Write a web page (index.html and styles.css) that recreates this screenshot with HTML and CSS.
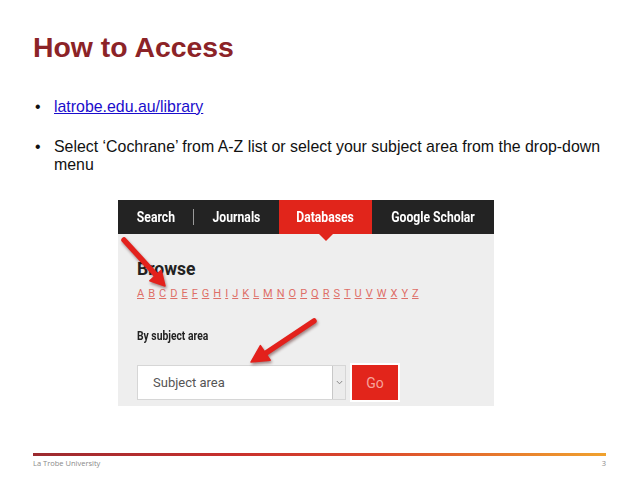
FILE: index.html
```html
<!DOCTYPE html>
<html>
<head>
<meta charset="utf-8">
<link rel="stylesheet" href="styles.css">
</head>
<body>
<div class="slide">
  <h1 class="title">How to Access</h1>
  <ul class="bullets">
    <li class="item"><span class="dot">•</span><a class="link" href="#">latrobe.edu.au/library</a></li>
    <li class="item item-2"><span class="dot">•</span><span class="txt">Select ‘Cochrane’ from A-Z list or select your subject area from the drop-down menu</span></li>
  </ul>

  <div class="shot">
    <nav class="tabs">
      <div class="tab tab-search"><span class="cond">Search</span></div>
      <div class="divider"></div>
      <div class="tab tab-journals"><span class="cond">Journals</span></div>
      <div class="tab tab-db"><span class="cond">Databases</span></div>
      <div class="tab tab-gs"><span class="cond">Google Scholar</span></div>
    </nav>
    <div class="panel">
      <div class="browse">Browse</div>
      <div class="letters">
        <a href="#">A</a><a href="#">B</a><a href="#">C</a><a href="#">D</a><a href="#">E</a><a href="#">F</a><a href="#">G</a><a href="#">H</a><a href="#">I</a><a href="#">J</a><a href="#">K</a><a href="#">L</a><a href="#">M</a><a href="#">N</a><a href="#">O</a><a href="#">P</a><a href="#">Q</a><a href="#">R</a><a href="#">S</a><a href="#">T</a><a href="#">U</a><a href="#">V</a><a href="#">W</a><a href="#">X</a><a href="#">Y</a><a href="#">Z</a>
      </div>
      <div class="subject-label"><span class="cond">By subject area</span></div>
      <div class="form-row">
        <div class="select">
          <span class="select-text">Subject area</span>
          <span class="select-btn">
            <svg width="7" height="5" viewBox="0 0 7 5"><path d="M0.8 1 L3.5 3.8 L6.2 1" fill="none" stroke="#888" stroke-width="1"/></svg>
          </span>
        </div>
        <div class="go">Go</div>
      </div>
    </div>
    <svg class="arrows" width="376" height="205" viewBox="0 0 376 205">
      <g fill="#e3211c" stroke="#e3211c" stroke-linejoin="round">
        <line x1="6" y1="40" x2="38" y2="75" stroke-width="5.5" stroke-linecap="round"/>
        <polygon points="47,86 31.8,80.8 43.2,70.4" stroke-width="1.5"/>
        <line x1="196" y1="121" x2="148" y2="153" stroke-width="5.5" stroke-linecap="round"/>
        <polygon points="133,162 152.2,160.2 142.4,145.6" stroke-width="1.5"/>
      </g>
    </svg>
  </div>

  <footer class="footer">
    <div class="rule"></div>
    <div class="foot-row">
      <span class="org">La Trobe University</span>
      <span class="page">3</span>
    </div>
  </footer>
</div>
</body>
</html>
```

FILE: styles.css
```css
* { box-sizing: border-box; }
html, body { margin: 0; padding: 0; background: #fff; }
.slide {
  width: 638px;
  height: 478px;
  padding: 30px 32px 0 33px;
  font-family: "Liberation Sans", Arial, sans-serif;
  display: flex;
  flex-direction: column;
  overflow: hidden;
}
.title {
  margin: 0;
  font-size: 28.4px;
  line-height: 34px;
  font-weight: bold;
  color: #8c2327;
}
.bullets {
  list-style: none;
  margin: 33.5px 0 0 0;
  padding: 0;
  font-size: 15.9px;
  line-height: 18px;
  color: #111;
}
.item { display: flex; }
.item-2 { margin-top: 22px; }
.dot { width: 21px; flex: none; padding-left: 2px; }
.link { color: #1a0dcc; text-decoration: underline; }
.txt { flex: 1; }

.shot {
  position: relative;
  width: 376px;
  margin: 26.5px 0 0 85px;
  font-family: Roboto, "Liberation Sans", sans-serif;
}
.tabs {
  display: flex;
  height: 34px;
  background: #232323;
  align-items: stretch;
}
.tab {
  display: flex;
  align-items: center;
  justify-content: center;
  color: #fff;
  font-weight: bold;
  font-size: 14px;
}
.cond { display: inline-block; transform: scaleX(0.87); white-space: nowrap; }
.tab-search { width: 75px; }
.divider { width: 1px; height: 16px; align-self: center; background: #9a9a9a; }
.tab-journals { width: 85px; }
.tab-db { width: 93px; background: #e1251b; position: relative; }
.tab-db::after {
  content: "";
  position: absolute;
  left: 40px;
  top: 34px;
  border-left: 7px solid transparent;
  border-right: 7px solid transparent;
  border-top: 7px solid #e1251b;
}
.tab-gs { width: 122px; }

.panel {
  background: #eeeeee;
  padding: 25px 0 4px 19px;
}
.browse {
  font-size: 17.5px;
  line-height: 20px;
  font-weight: bold;
  color: #222;
}
.letters {
  margin-top: 8px;
  display: flex;
  gap: 4px;
  font-size: 11px;
  line-height: 13px;
}
.letters a { color: #de6f68; text-decoration: underline; }
.subject-label {
  margin-top: 29px;
  font-size: 12px;
  line-height: 14px;
  font-weight: bold;
  color: #222;
}
.subject-label .cond { transform: scaleX(0.86); transform-origin: left center; }
.form-row {
  margin-top: 20px;
  display: flex;
  align-items: center;
  gap: 4px;
}
.select {
  width: 209px;
  height: 35px;
  background: #fff;
  border: 1px solid #d6d6d6;
  display: flex;
  align-items: stretch;
}
.select-text {
  flex: 1;
  display: flex;
  align-items: center;
  padding-left: 15px;
  font-size: 13px;
  color: #555;
}
.select-btn {
  width: 13px;
  background: #ececec;
  border-left: 1px solid #c8c8c8;
  display: flex;
  align-items: center;
  justify-content: center;
}
.go {
  width: 50px;
  height: 39px;
  background: #e2251b;
  border: 2px solid #fff;
  color: #f7a39b;
  font-size: 14px;
  display: flex;
  align-items: center;
  justify-content: center;
}
.arrows {
  position: absolute;
  left: 0;
  top: 0;
  overflow: visible;
  filter: drop-shadow(1px 2px 1.5px rgba(60,0,0,0.45));
}

.footer {
  margin-top: 47px;
  width: 573px;
}
.rule {
  height: 3px;
  background: linear-gradient(to right, #9b2a2f 0%, #c8302d 35%, #dc4a2c 60%, #f0a22e 100%);
}
.foot-row {
  display: flex;
  justify-content: space-between;
  margin-top: 2px;
  font-family: "Open Sans", "Liberation Sans", sans-serif;
  font-size: 7.5px;
  line-height: 11px;
  color: #8a8a8a;
}
```
